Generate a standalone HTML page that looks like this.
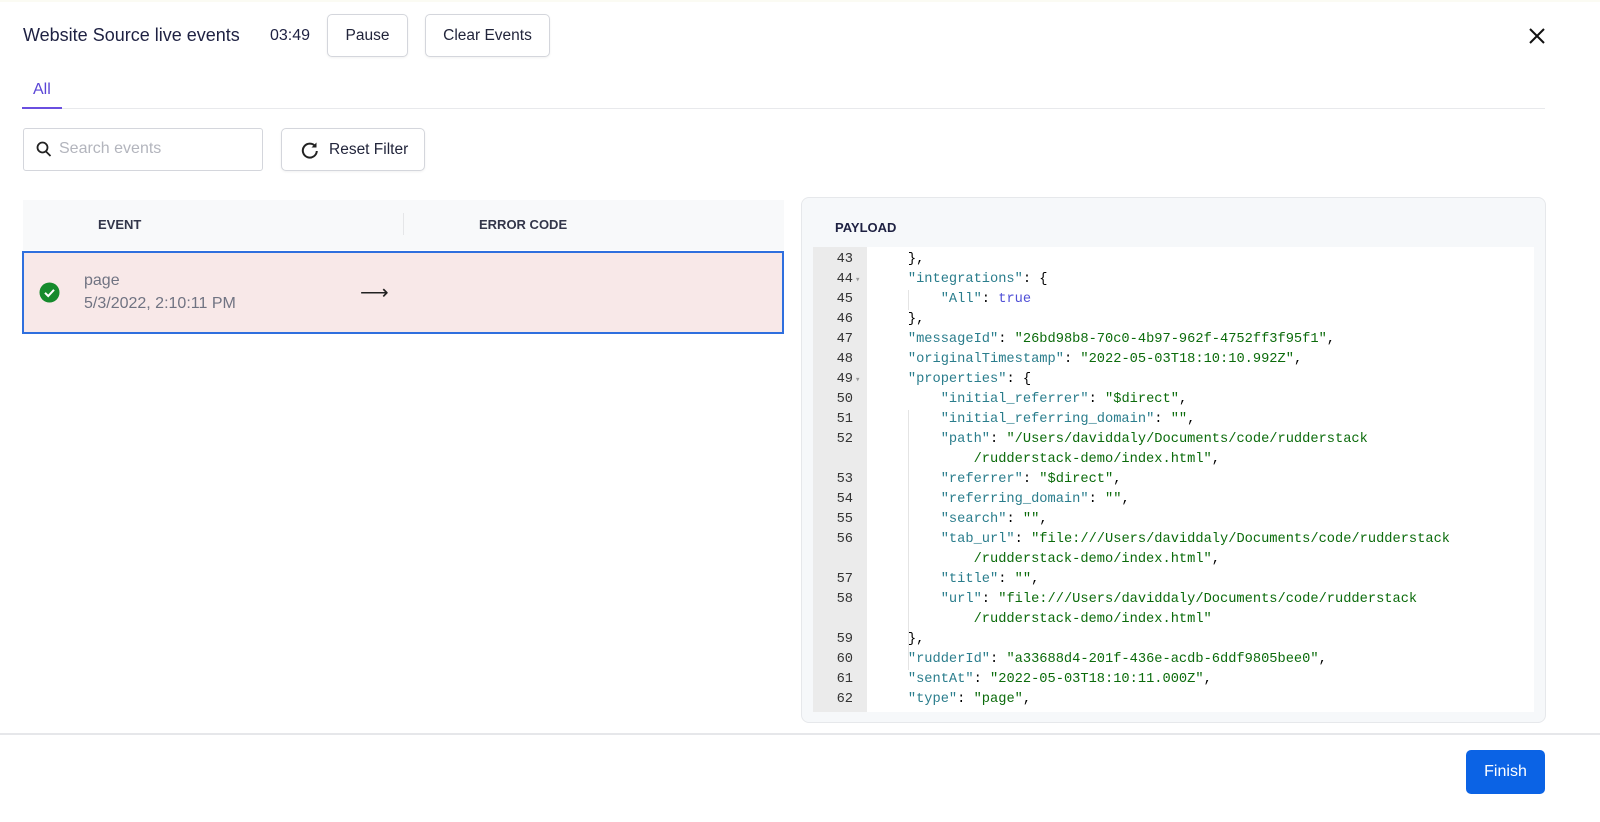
<!DOCTYPE html>
<html><head><meta charset="utf-8"><style>
*{box-sizing:border-box;margin:0;padding:0}
body{width:1600px;height:822px;background:#fff;font-family:"Liberation Sans",sans-serif;color:#1e2142;position:relative;overflow:hidden}
.a{position:absolute}
.btn{position:absolute;border:1px solid #d4d6dc;border-radius:5px;background:#fff;font-size:15.5px;color:#22253b;display:flex;align-items:center;justify-content:center;box-shadow:0 1px 2px rgba(0,0,0,.06)}
.code{font-family:"Liberation Mono",monospace;font-size:13.7px;line-height:20px;white-space:pre;color:#000}
.k{color:#2a7d8c}.s{color:#0b6b0b}.b{color:#4f4fd6}
.guide{position:absolute;width:1px;background:#e4e4e4}
</style></head><body>
<div class="a" style="left:0;top:0;width:1600px;height:2px;background:#fbfbf3"></div>
<div class="a" style="left:23px;top:25px;font-size:18px">Website Source live events</div>
<div class="a" style="left:270px;top:27px;font-size:16px">03:49</div>
<div class="btn" style="left:327px;top:14px;width:81px;height:43px">Pause</div>
<div class="btn" style="left:425px;top:14px;width:125px;height:43px">Clear Events</div>
<svg class="a" style="left:1528px;top:27px" width="18" height="18" viewBox="0 0 18 18"><path d="M2 2L16 16M16 2L2 16" stroke="#111" stroke-width="2"/></svg>
<div class="a" style="left:33px;top:81px;font-size:16px;color:#5a45d6">All</div>
<div class="a" style="left:22px;top:108px;width:1523px;height:1px;background:#e8e9ec"></div>
<div class="a" style="left:22px;top:107px;width:40px;height:2px;background:#6a4fe0"></div>
<div class="a" style="left:23px;top:128px;width:240px;height:43px;border:1px solid #d4d6dc;border-radius:3px"></div>
<svg class="a" style="left:36px;top:141px" width="16" height="17" viewBox="0 0 16 17"><circle cx="6.5" cy="6.5" r="5" fill="none" stroke="#222" stroke-width="1.8"/><path d="M10 10.5L14.5 15" stroke="#222" stroke-width="1.8"/></svg>
<div class="a" style="left:59px;top:140px;font-size:16px;color:#b3b5bd">Search events</div>
<div class="btn" style="left:281px;top:128px;width:144px;height:43px;justify-content:flex-start;padding-left:18px"><svg width="20" height="20" viewBox="0 0 20 20" style="margin-right:9px"><path d="M15.5 6.5A7 7 0 1 0 16.8 11" fill="none" stroke="#222" stroke-width="2"/><path d="M16.5 2.5V7.5H11.5Z" fill="#222"/></svg>Reset Filter</div>
<div class="a" style="left:23px;top:200px;width:761px;height:50px;background:#f8f9fa"></div>
<div class="a" style="left:403px;top:213px;width:1px;height:22px;background:#e5e6e8"></div>
<div class="a" style="left:98px;top:217px;font-size:13px;font-weight:bold;color:#33364a">EVENT</div>
<div class="a" style="left:479px;top:217px;font-size:13px;font-weight:bold;color:#33364a">ERROR CODE</div>
<div class="a" style="left:22px;top:251px;width:762px;height:83px;background:#f8e8e8;border:2px solid #2f6fde"></div>
<svg class="a" style="left:39px;top:282px" width="21" height="21" viewBox="0 0 21 21"><circle cx="10.5" cy="10.5" r="10" fill="#168a2c"/><path d="M6 10.8L9.2 14L15 7.8" fill="none" stroke="#fff" stroke-width="2"/></svg>
<div class="a" style="left:84px;top:272px;font-size:16px;color:#707382">page</div>
<div class="a" style="left:84px;top:295px;font-size:16px;color:#707382">5/3/2022, 2:10:11 PM</div>
<div class="a" style="left:360px;top:280px;font-size:20px;color:#222">⟶</div>
<div class="a" style="left:801px;top:197px;width:745px;height:526px;background:#f6f8fa;border:1px solid #e6e8eb;border-radius:8px"></div>
<div class="a" style="left:835px;top:220px;font-size:13px;font-weight:bold;color:#1e2142">PAYLOAD</div>
<div class="a" style="left:813px;top:247px;width:721px;height:465px;background:#fff;overflow:hidden">
<div class="a" style="left:0;top:0;width:54px;height:465px;background:#ebebeb"></div>
<div class="guide" style="left:95px;top:43px;height:20px"></div>
<div class="guide" style="left:95px;top:163px;height:260px"></div>
<div class="a code" style="left:0;top:3px;width:40px;text-align:right;color:#333">43
44
45
46
47
48
49
50
51
52

53
54
55
56

57
58

59
60
61
62</div>
<div class="a code" style="left:42px;top:3px;color:#999;font-size:9px;line-height:20px"> 
▾
 
 
 
 
▾</div>
<div class="a code" style="left:62px;top:3px">    },
    <span class="k">"integrations"</span>: {
        <span class="k">"All"</span>: <span class="b">true</span>
    },
    <span class="k">"messageId"</span>: <span class="s">"26bd98b8-70c0-4b97-962f-4752ff3f95f1"</span>,
    <span class="k">"originalTimestamp"</span>: <span class="s">"2022-05-03T18:10:10.992Z"</span>,
    <span class="k">"properties"</span>: {
        <span class="k">"initial_referrer"</span>: <span class="s">"$direct"</span>,
        <span class="k">"initial_referring_domain"</span>: <span class="s">""</span>,
        <span class="k">"path"</span>: <span class="s">"/Users/daviddaly/Documents/code/rudderstack</span>
<span class="s">            /rudderstack-demo/index.html"</span>,
        <span class="k">"referrer"</span>: <span class="s">"$direct"</span>,
        <span class="k">"referring_domain"</span>: <span class="s">""</span>,
        <span class="k">"search"</span>: <span class="s">""</span>,
        <span class="k">"tab_url"</span>: <span class="s">"file:///Users/daviddaly/Documents/code/rudderstack</span>
<span class="s">            /rudderstack-demo/index.html"</span>,
        <span class="k">"title"</span>: <span class="s">""</span>,
        <span class="k">"url"</span>: <span class="s">"file:///Users/daviddaly/Documents/code/rudderstack</span>
<span class="s">            /rudderstack-demo/index.html"</span>
    },
    <span class="k">"rudderId"</span>: <span class="s">"a33688d4-201f-436e-acdb-6ddf9805bee0"</span>,
    <span class="k">"sentAt"</span>: <span class="s">"2022-05-03T18:10:11.000Z"</span>,
    <span class="k">"type"</span>: <span class="s">"page"</span>,</div>
</div>
<div class="a" style="left:0;top:733px;width:1600px;height:2px;background:#e6e7ea"></div>
<div class="a" style="left:1466px;top:750px;width:79px;height:44px;background:#0b63e5;border-radius:5px;color:#fff;font-size:16px;display:flex;align-items:center;justify-content:center">Finish</div>
</body></html>
